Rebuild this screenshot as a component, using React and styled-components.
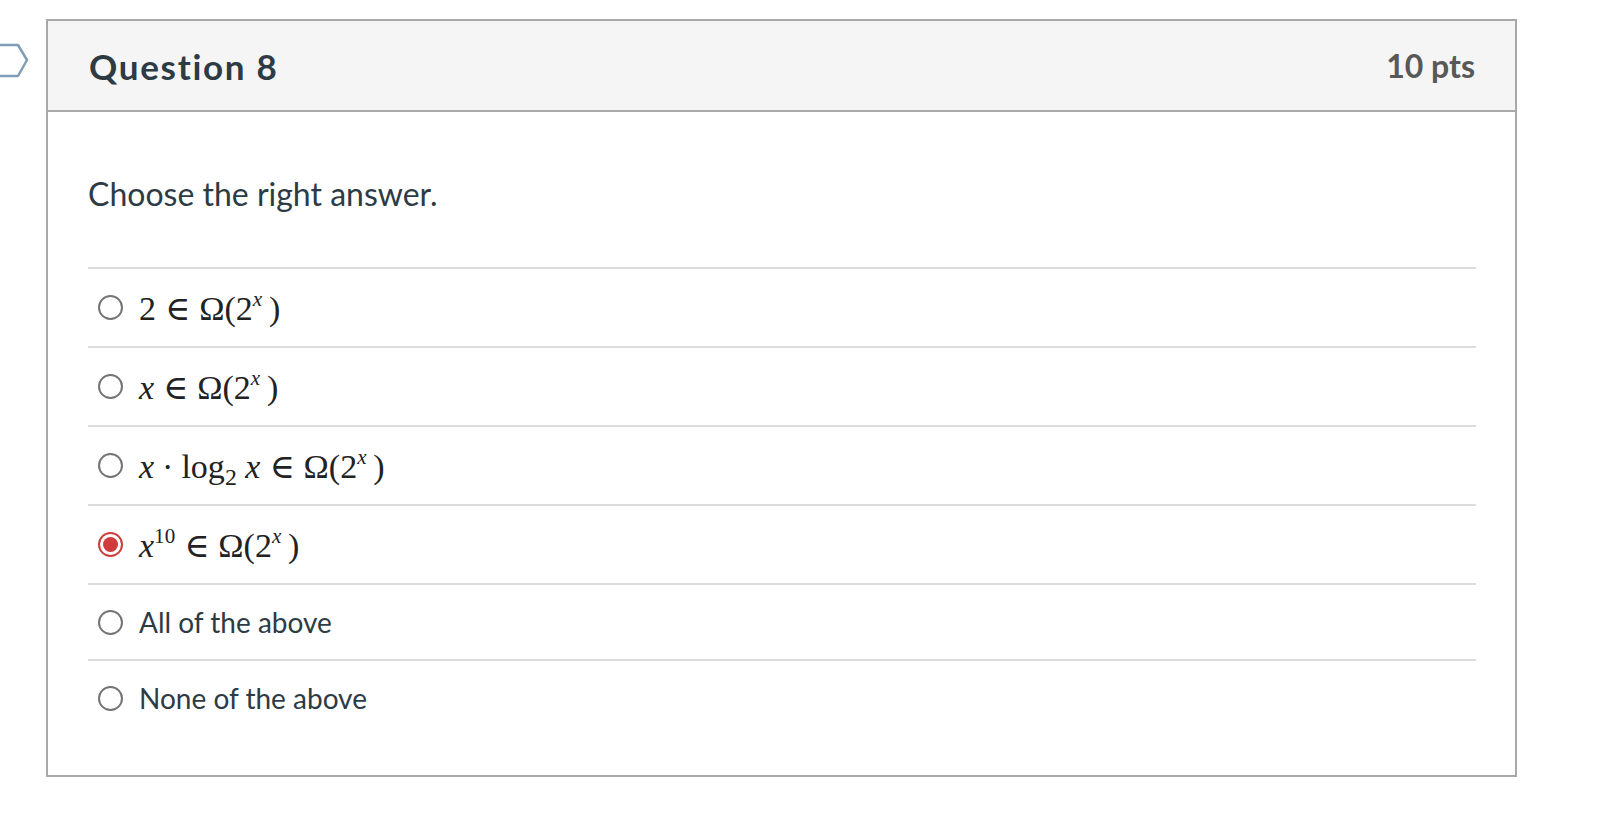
import React from "react";
import styled, { createGlobalStyle } from "styled-components";

const GlobalStyle = createGlobalStyle`
  body {
    margin: 0;
    background: #fff;
    font-family: Lato, "Liberation Sans", sans-serif;
  }
`;

const Page = styled.div`
  display: flex;
  align-items: flex-start;
  padding-top: 19px;
`;

const FlagSlot = styled.div`
  width: 46px;
  flex: none;
  padding-top: 24px;
  svg {
    display: block;
  }
`;

const Card = styled.div`
  width: 1467px;
  border: 2px solid #a8a8a8;
`;

const Header = styled.div`
  height: 89px;
  background: #f5f5f5;
  border-bottom: 2px solid #a8a8a8;
  display: flex;
  align-items: center;
  justify-content: space-between;
  padding: 0 40px 0 41px;
`;

const Title = styled.h2`
  margin: 0;
  font-family: Lato, sans-serif;
  font-weight: 700;
  font-size: 35px;
  letter-spacing: 1.7px;
  color: #2d3b45;
`;

const Points = styled.div`
  font-family: Lato, sans-serif;
  font-weight: 700;
  font-size: 32px;
  color: #585858;
`;

const Body = styled.div`
  padding: 63px 39px 40px 40px;
`;

const Prompt = styled.p`
  margin: 0 0 54px;
  font-family: Lato, sans-serif;
  font-size: 32px;
  line-height: 38px;
  color: #2d3b45;
`;

const Answers = styled.div`
  display: flex;
  flex-direction: column;
`;

const Row = styled.label`
  display: flex;
  align-items: center;
  gap: 16px;
  height: ${(p) => (p.$math ? 77 : 74)}px;
  padding-left: 10px;
  border-top: 2px solid #dcdcdc;
`;

const Radio = styled.span`
  width: 25px;
  height: 25px;
  box-sizing: border-box;
  border-radius: 50%;
  flex: none;
  border: 2px solid ${(p) => (p.$checked ? "#d03b3b" : "#747474")};
  display: flex;
  align-items: center;
  justify-content: center;
  &::after {
    content: "";
    width: 15px;
    height: 15px;
    border-radius: 50%;
    background: #d03b3b;
    display: ${(p) => (p.$checked ? "block" : "none")};
  }
`;

const Label = styled.span`
  font-family: Lato, sans-serif;
  font-size: 28px;
  color: #2d3b45;
`;

const Math = styled.span`
  font-family: "Liberation Serif", "DejaVu Serif", serif;
  font-size: 34px;
  color: #222;
  white-space: nowrap;
  i {
    font-style: italic;
  }
  sup {
    font-size: 0.62em;
    vertical-align: 0.65em;
    line-height: 0;
  }
  sub {
    font-size: 0.7em;
    vertical-align: -0.3em;
    line-height: 0;
  }
`;

const Op = styled.span`
  margin: 0 ${(p) => p.$space || 9}px;
`;

function Flag() {
  return (
    <svg width="30" height="36" viewBox="0 0 30 36">
      <path
        d="M-4 2 H18 L27 17 L18 33 H-4"
        fill="none"
        stroke="#7f9db6"
        strokeWidth="2.5"
        strokeLinejoin="round"
      />
    </svg>
  );
}

const omega = (
  <>
    Ω(2<sup><i>x</i></sup>&thinsp;)
  </>
);

const answers = [
  {
    math: true,
    content: (
      <>
        2<Op>∈</Op>
        {omega}
      </>
    ),
  },
  {
    math: true,
    content: (
      <>
        <i>x</i>
        <Op>∈</Op>
        {omega}
      </>
    ),
  },
  {
    math: true,
    content: (
      <>
        <i>x</i>
        <Op $space={8}>·</Op>log<sub>2</sub> <i>x</i>
        <Op>∈</Op>
        {omega}
      </>
    ),
  },
  {
    math: true,
    checked: true,
    content: (
      <>
        <i>x</i>
        <sup>10</sup>
        <Op>∈</Op>
        {omega}
      </>
    ),
  },
  { content: "All of the above" },
  { content: "None of the above" },
];

export default function App() {
  return (
    <>
      <GlobalStyle />
      <Page>
        <FlagSlot>
          <Flag />
        </FlagSlot>
        <Card>
          <Header>
            <Title>Question 8</Title>
            <Points>10 pts</Points>
          </Header>
          <Body>
            <Prompt>Choose the right answer.</Prompt>
            <Answers>
              {answers.map((a, i) => (
                <Row key={i} $math={a.math}>
                  <Radio $checked={a.checked} />
                  {a.math ? <Math>{a.content}</Math> : <Label>{a.content}</Label>}
                </Row>
              ))}
            </Answers>
          </Body>
        </Card>
      </Page>
    </>
  );
}
